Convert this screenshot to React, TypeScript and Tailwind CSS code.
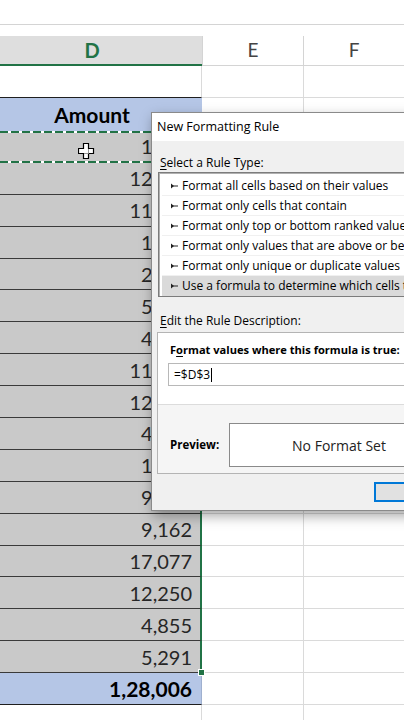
import React from 'react'

const values = [
  '1,980', '12,430', '11,270', '1,150', '2,870', '5,610', '4,280', '11,605', '12,090',
  '4,945', '1,661', '9,480', '9,162', '17,077', '12,250', '4,855', '5,291',
]

const rules = [
  'Format all cells based on their values',
  'Format only cells that contain',
  'Format only top or bottom ranked values',
  'Format only values that are above or below average',
  'Format only unique or duplicate values',
  'Use a formula to determine which cells to format',
]

const Ants: React.FC<{ className: string }> = ({ className }) => (
  <svg className={className} width="202" height="2" viewBox="0 0 202 2">
    <rect x="0" y="0" width="202" height="2" fill="#ffffff" />
    <line x1="0" y1="1" x2="202" y2="1" stroke="#217346" strokeWidth="2" strokeDasharray="8 3" />
  </svg>
)

const RuleArrow = () => (
  <svg width="7" height="6" viewBox="0 0 7 6" className="shrink-0">
    <path d="M0 0.5 L3 3 L0 5.5 Z" fill="#222" />
    <line x1="0" y1="3" x2="7" y2="3" stroke="#222" strokeWidth="1" />
  </svg>
)

const GridTail = ({ h }: { h: string }) => (
  <>
    <div className={`w-[102px] ${h} border-b border-r border-[#dadada]`} />
    <div className={`flex-1 ${h} border-b border-[#dadada]`} />
  </>
)

const App: React.FC = () => {
  return (
    <div className="relative w-[404px] h-[720px] overflow-hidden bg-white font-['Lato',sans-serif] text-[#1a1a1a]">
      <div className="h-[24px]" />
      <div className="h-px bg-[#d4d4d4]" />
      <div className="h-[11px]" />

      {/* column headers */}
      <div className="flex h-[30px]">
        <div className="w-[202px] h-full bg-[#dedede] border-b-2 border-[#217346] flex items-center justify-center pr-[18px] text-[20px] font-bold text-[#217346]">
          D
        </div>
        <div className="w-[102px] h-full border-b border-l border-r border-[#d4d4d4] flex items-center justify-center text-[19px] text-[#444]">
          E
        </div>
        <div className="flex-1 h-full border-b border-[#d4d4d4] flex items-center justify-center text-[19px] text-[#444]">
          F
        </div>
      </div>

      {/* blank row */}
      <div className="flex">
        <div className="w-[202px] h-[32px] border-b border-[#1f1f1f] border-r border-r-[#dadada]" />
        <GridTail h="h-[32px]" />
      </div>

      {/* Amount */}
      <div className="flex">
        <div className="w-[202px] h-[33px] bg-[#b5c6e6] flex items-center justify-center pr-[18px] text-[21px] font-bold text-black">
          Amount
        </div>
        <GridTail h="h-[33px]" />
      </div>

      {values.map((v, i) => (
        <div key={i} className="flex">
          <div className="relative w-[202px] h-[31.9px] bg-[#c9c9c9] border-b border-[#3a3a3a] border-r-2 border-r-[#217346] flex items-center justify-end pr-[8px] text-[20px] text-[#262626]">
            {v}
            {i === 0 && (
              <>
                <Ants className="absolute top-0 left-0" />
                <Ants className="absolute bottom-[-1px] left-0" />
              </>
            )}
            {i === values.length - 1 && (
              <div className="absolute right-[-5px] bottom-[-4px] w-[7px] h-[7px] bg-[#217346] border border-white z-10" />
            )}
          </div>
          <GridTail h="h-[31.9px]" />
        </div>
      ))}

      {/* total */}
      <div className="flex">
        <div className="w-[202px] h-[32px] bg-[#b5c6e6] border-b border-[#1f1f1f] border-r border-r-[#9fb0cf] flex items-center justify-end pr-[9px] text-[21px] font-bold text-black">
          1,28,006
        </div>
        <GridTail h="h-[32px]" />
      </div>
      <div className="flex">
        <div className="w-[202px] h-[32px] border-r border-[#dadada]" />
        <GridTail h="h-[32px]" />
      </div>

      {/* cursor */}
      <svg className="absolute left-[78px] top-[143px]" width="17" height="17" viewBox="0 0 17 17">
        <path d="M5.5 0.5 h5 v5 h5 v5 h-5 v5 h-5 v-5 h-5 v-5 h5 z" fill="#fff" stroke="#000" strokeWidth="1.2" />
        <path d="M10.5 6 v4.5 M6 10.5 h4.5" stroke="#9a9a9a" strokeWidth="1" />
      </svg>

      {/* dialog */}
      <div className="absolute left-[151px] top-[112px] w-[330px] border border-[#8a8a8a] bg-[#f0f0f0] shadow-[2px_5px_12px_rgba(0,0,0,0.35)] font-['Open_Sans',sans-serif] text-[12px] text-black">
        <div className="h-[28px] bg-white flex items-center pl-[5px] text-[12.5px]">New Formatting Rule</div>
        <div className="pl-[6px] pt-[14px] pb-[8px]">
          <div className="ml-[2px] leading-[16px]">
            <u className="underline-offset-2">S</u>elect a Rule Type:
          </div>
          <div className="mt-[1px] border border-[#7c7c7c] shadow-[inset_1px_1px_0_#b0b0b0] bg-white pt-[3px] px-[3px]">
            {rules.map((r, i) => (
              <div
                key={r}
                className={`h-[20px] flex items-center gap-[4px] pl-[9px] whitespace-nowrap border-b border-[#f0f0f0] ${
                  i === rules.length - 1 ? 'bg-[#dadada] border-b-0' : ''
                }`}
              >
                <RuleArrow />
                <span>{r}</span>
              </div>
            ))}
          </div>
          <div className="mt-[16px] ml-[2px] leading-[16px]">
            <u className="underline-offset-2">E</u>dit the Rule Description:
          </div>
          <div className="mt-[3px] ml-[-1px] border border-[#b4b4b4]">
            <div className="bg-white pt-[9px] pl-[10px] pb-[18px] border-b border-[#dcdcdc]">
              <div className="pl-[2px] leading-[16px] text-[11.1px] font-bold whitespace-nowrap">
                F<u className="underline-offset-2">o</u>rmat values where this formula is true:
              </div>
              <div className="mt-[5px] h-[23px] border border-[#b8b8b8] bg-white pl-[5px] flex items-center">
                <span>=$D$3</span>
                <span className="ml-[1px] w-px h-[14px] bg-black" />
              </div>
            </div>
            <div className="bg-[#f5f5f5] pt-[18px] pb-[6px] pl-[12px] flex items-center">
              <div className="w-[59px] text-[11.5px] font-bold">Preview:</div>
              <div className="w-[220px] h-[44px] border border-[#8a8a8a] bg-white flex items-center justify-center text-[14px] text-[#222]">
                No Format Set
              </div>
            </div>
          </div>
          <div className="mt-[8px] pl-[216px]">
            <div className="w-[80px] h-[20px] border-2 border-[#0078d7] bg-[#e1e1e1] flex items-center justify-center">
              OK
            </div>
          </div>
        </div>
      </div>
    </div>
  )
}

export default App
